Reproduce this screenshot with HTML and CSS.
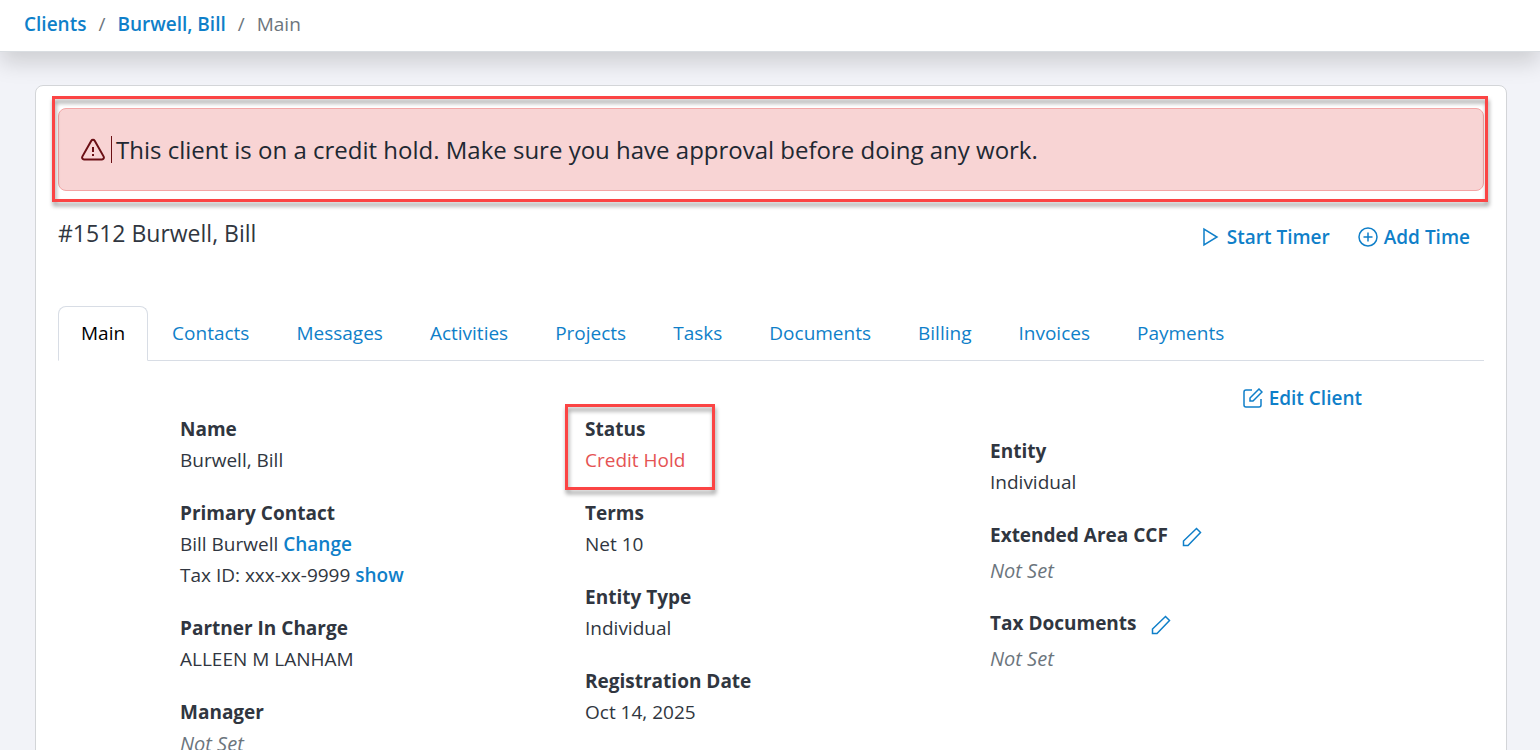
FILE: index.html
```html
<!DOCTYPE html>
<html lang="en">
<head>
    <meta charset="UTF-8">
    <meta name="viewport" content="width=device-width, initial-scale=1.0">
    <title>Burwell, Bill - Main</title>
    <link rel="stylesheet" href="styles.css">
</head>
<body>
    <header class="topbar">
        <nav class="breadcrumb">
            <a href="#">Clients</a>
            <span class="sep">/</span>
            <a href="#">Burwell, Bill</a>
            <span class="sep">/</span>
            <span>Main</span>
        </nav>
    </header>

    <main class="card">
        <div class="alert highlight" role="alert">
            <svg class="alert-icon" viewBox="0 0 26 26"><path d="M11.3 3.8L2.3 19.6A2 2 0 0 0 4 22.5h18a2 2 0 0 0 1.7-2.9L14.7 3.8a2 2 0 0 0-3.4 0z"/><path d="M13 10v5M13 17v2"/></svg>
            <span class="alert-text">This client is on a credit hold. Make sure you have approval before doing any work.</span>
        </div>

        <div class="client-header">
            <h1>#1512 Burwell, Bill</h1>
            <div class="actions">
                <button type="button" class="btn-link">
                    <svg class="icon" viewBox="0 0 20 20"><path d="M3 2v16L16 10z"/></svg>
                    Start Timer
                </button>
                <button type="button" class="btn-link">
                    <svg class="icon" viewBox="0 0 20 20"><circle cx="10" cy="10" r="9"/><path d="M10 5.5v9M5.5 10h9"/></svg>
                    Add Time
                </button>
            </div>
        </div>

        <nav class="tabs">
            <a href="#" class="tab active">Main</a>
            <a href="#" class="tab">Contacts</a>
            <a href="#" class="tab">Messages</a>
            <a href="#" class="tab">Activities</a>
            <a href="#" class="tab">Projects</a>
            <a href="#" class="tab">Tasks</a>
            <a href="#" class="tab">Documents</a>
            <a href="#" class="tab">Billing</a>
            <a href="#" class="tab">Invoices</a>
            <a href="#" class="tab">Payments</a>
        </nav>

        <section class="details">
            <div class="edit-row">
                <button type="button" class="btn-link">
                    <svg class="icon" viewBox="0 0 20 20"><path d="M9 2H3a2 2 0 0 0-2 2v13a2 2 0 0 0 2 2h13a2 2 0 0 0 2-2v-6"/><path d="M16 1l3 3-9 9H7v-3z"/></svg>
                    Edit Client
                </button>
            </div>
            <div class="columns">
                <div class="column">
                    <div class="field">
                        <div class="label">Name</div>
                        <div>Burwell, Bill</div>
                    </div>
                    <div class="field">
                        <div class="label">Primary Contact</div>
                        <div>Bill Burwell <a href="#">Change</a></div>
                        <div>Tax ID: xxx-xx-9999 <a href="#">show</a></div>
                    </div>
                    <div class="field">
                        <div class="label">Partner In Charge</div>
                        <div>ALLEEN M LANHAM</div>
                    </div>
                    <div class="field">
                        <div class="label">Manager</div>
                        <div class="not-set">Not Set</div>
                    </div>
                </div>
                <div class="column">
                    <div class="field highlight status">
                        <div class="label">Status</div>
                        <div class="danger">Credit Hold</div>
                    </div>
                    <div class="field">
                        <div class="label">Terms</div>
                        <div>Net 10</div>
                    </div>
                    <div class="field">
                        <div class="label">Entity Type</div>
                        <div>Individual</div>
                    </div>
                    <div class="field">
                        <div class="label">Registration Date</div>
                        <div>Oct 14, 2025</div>
                    </div>
                </div>
                <div class="column column-last">
                    <div class="field">
                        <div class="label">Entity</div>
                        <div>Individual</div>
                    </div>
                    <div class="field">
                        <div class="label editable">Extended Area CCF
                            <button type="button" class="btn-link" aria-label="Edit Extended Area CCF"><svg class="icon" viewBox="0 0 20 20"><path d="M14.5 1.5l4 4L6 18.5H1.5V14z"/></svg></button>
                        </div>
                        <div class="not-set">Not Set</div>
                    </div>
                    <div class="field">
                        <div class="label editable">Tax Documents
                            <button type="button" class="btn-link" aria-label="Edit Tax Documents"><svg class="icon" viewBox="0 0 20 20"><path d="M14.5 1.5l4 4L6 18.5H1.5V14z"/></svg></button>
                        </div>
                        <div class="not-set">Not Set</div>
                    </div>
                </div>
            </div>
        </section>
    </main>
</body>
</html>
```
FILE: styles.css
```css
* {
    box-sizing: border-box;
}
html {
    height: 100%;
    overflow: hidden;
}
body {
    margin: 0;
    background-color: #f2f3f8;
    font-family: "Open Sans", "Noto Sans", sans-serif;
    font-size: 19px;
    line-height: 31px;
    color: #303640;
}
a {
    color: #0f7fc9;
    font-weight: 600;
    text-decoration: none;
}
.topbar {
    background-color: white;
    height: 52px;
    padding: 9px 24px;
    border-bottom: 1px solid #d9dde1;
    box-shadow: 0 11px 22px rgba(0,0,0,0.15);
}
.breadcrumb {
    display: flex;
    gap: 12px;
    color: #6c757d;
}
.card {
    background-color: white;
    margin: 33px 33px 0 35px;
    padding: 22px;
    border: 1px solid #d3d5d8;
    border-radius: 8px;
}
.alert {
    display: flex;
    align-items: center;
    gap: 5px;
    height: 83px;
    padding: 0 21px;
    background-color: #f8d4d4;
    border: 1px solid #f3a5a5;
    border-radius: 8px;
}
.alert-icon {
    width: 26px;
    height: 26px;
    fill: none;
    stroke: #6b0f14;
    stroke-width: 2;
}
.alert-text {
    padding-left: 4px;
    border-left: 1px solid #6b0f14;
    font-size: 24px;
    line-height: 27px;
    color: #212832;
}

/* red callout frames */
.highlight {
    position: relative;
}
.highlight::after {
    content: "";
    position: absolute;
    box-sizing: border-box;
    inset: -13px -5px -12px -7px;
    border: 3px solid #fb4444;
    filter: drop-shadow(1px 4px 2px rgba(0,0,0,0.4));
    pointer-events: none;
}
.status::after {
    inset: -10px auto auto -20px;
    width: 150px;
    height: 86px;
}

.client-header {
    display: flex;
    justify-content: space-between;
    height: 93px;
    margin-top: 22px;
}
h1 {
    margin: 3px 0;
    font-size: 23px;
    font-weight: 400;
    line-height: 34px;
}
.actions {
    display: flex;
    align-items: flex-start;
    gap: 28px;
    padding: 9px 14px;
}
.btn-link {
    display: inline-flex;
    align-items: center;
    gap: 6px;
    padding: 0;
    border: none;
    background: none;
    color: #0f7fc9;
    font: inherit;
    font-weight: 600;
    cursor: pointer;
}
.icon {
    width: 20px;
    height: 20px;
    margin-bottom: 2px;
    fill: none;
    stroke: currentColor;
    stroke-width: 1.5;
}
.tabs {
    display: flex;
    gap: 1px;
    border-bottom: 1px solid #d8dde5;
}
.tab {
    padding: 11px 22px;
    border: 1px solid transparent;
    border-radius: 8px 8px 0 0;
    margin-bottom: -1px;
    font-weight: 400;
}
.tab.active {
    background-color: white;
    border-color: #d8dde5;
    border-bottom-color: white;
    color: black;
}
.details {
    padding: 22px 89px 0 122px;
}
.edit-row {
    display: flex;
    justify-content: flex-end;
    padding-right: 33px;
}
.columns {
    display: grid;
    grid-template-columns: repeat(3, 1fr);
}
.column-last {
    padding-top: 22px;
}
.field {
    margin-bottom: 22px;
}
.label {
    font-weight: 700;
}
.editable {
    display: flex;
    align-items: flex-start;
    gap: 14px;
    height: 35px;
}
.editable .btn-link {
    height: 35px;
}
.not-set {
    color: #6c757d;
    font-size: 20px;
    font-style: italic;
}
.danger {
    color: #e55353;
}
```
